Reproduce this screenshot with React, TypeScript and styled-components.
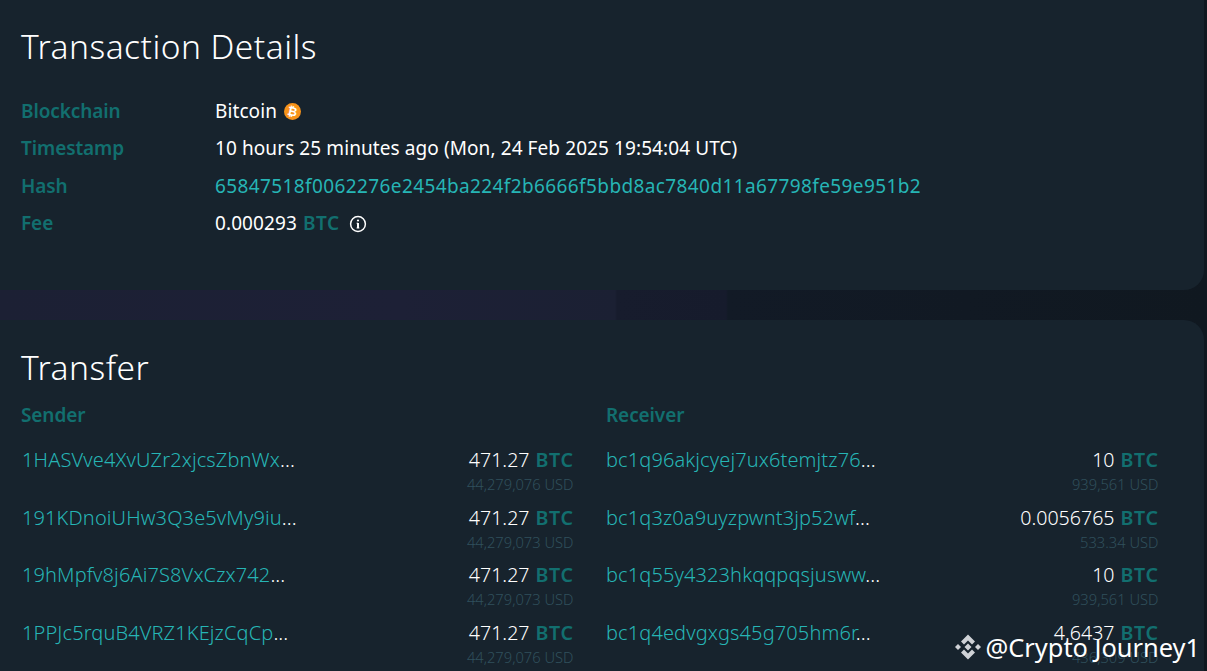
import React from "react";
import styled, { createGlobalStyle } from "styled-components";

const Global = createGlobalStyle`
  html, body { margin: 0; padding: 0; height: 671px; overflow: hidden; background: #101820; }
  #root { height: 671px; }
  * { box-sizing: border-box; }
`;

const Page = styled.div`
  position: relative;
  height: 671px;
  overflow: hidden;
  display: flex;
  flex-direction: column;
  gap: 30px;
  padding-right: 3px;
  font-family: "Noto Sans", "Open Sans", sans-serif;
  background: linear-gradient(90deg, #1c2034 0, #1d2036 400px, #1b2033 615px, #171c2d 617px, #161b2c 726px, #121a26 728px, #101820 1207px);
`;

const Panel = styled.section<{ $height: number; $pad: number }>`
  height: ${(p) => p.$height}px;
  flex: none;
  background: #17232d;
  border-radius: 0 20px 20px 0;
  padding: ${(p) => p.$pad}px 0 0 21px;
`;

const FirstPanel = styled(Panel)`
  border-radius: 0 0 20px 0;
`;

const Title = styled.h2`
  margin: 0;
  font-size: 33.5px;
  line-height: 40px;
  font-weight: 300;
  color: #ffffff;
  letter-spacing: 0.48px;
`;

const InfoGrid = styled.dl`
  margin: 26.5px 0 0;
  display: grid;
  grid-template-columns: 194px 1fr;
  grid-auto-rows: 37.5px;
  font-size: 19px;
`;

const Term = styled.dt`
  color: #126f6f;
  font-weight: 600;
  line-height: 37.5px;
  letter-spacing: -0.1px;
`;

const Value = styled.dd`
  margin: 0;
  color: #ffffff;
  line-height: 37.5px;
  display: flex;
  align-items: center;
  white-space: nowrap;
  letter-spacing: 0.09px;
`;

const HashLink = styled.span`
  color: #26b5b5;
  letter-spacing: 0.39px;
`;

const Unit = styled.span`
  color: #126f6f;
  font-weight: 600;
  margin-left: 6px;
  letter-spacing: 0.6px;
`;

const IconSlot = styled.span<{ $gap: number }>`
  display: inline-flex;
  margin-left: ${(p) => p.$gap}px;
`;

const Columns = styled.div`
  margin-top: 16px;
  display: grid;
  grid-template-columns: 552.5px 552.5px;
  column-gap: 32.5px;
`;

const ColumnHead = styled.div`
  color: #126f6f;
  font-size: 19px;
  font-weight: 600;
  line-height: 24px;
  margin-bottom: 19px;
  letter-spacing: -0.1px;
`;

const Row = styled.div`
  height: 57.5px;
  display: flex;
  justify-content: space-between;
  font-size: 19.6px;
`;

const Address = styled.div<{ $inset: number }>`
  color: #ffffff;
  font-size: 20px;
  line-height: 24px;
  font-weight: 300;
  padding: 2px 0 0 ${(p) => p.$inset}px;
  white-space: nowrap;
  letter-spacing: 0.12px;
`;

const AddressText = styled.span`
  color: #26b5b5;
`;

const Amounts = styled.div`
  display: flex;
  flex-direction: column;
  align-items: flex-end;
  padding-top: 2px;
`;

const Amount = styled.div`
  color: #ffffff;
  line-height: 24px;
  font-weight: 300;
`;

const Usd = styled.div`
  color: #30505c;
  font-size: 14.7px;
  line-height: 24px;
  font-weight: 300;
`;

const Watermark = styled.div`
  position: absolute;
  right: 7px;
  top: 632px;
  display: flex;
  align-items: center;
  gap: 4px;
  color: #ffffff;
  font-size: 25.4px;
  line-height: 30px;
`;

const BitcoinIcon = () => (
  <svg width="17" height="17" viewBox="0 0 17 17">
    <circle cx="8.5" cy="8.5" r="8.5" fill="#f7931a" />
    <text x="8.5" y="12.6" textAnchor="middle" fontSize="12" fontWeight="700" fill="#fff" fontFamily="'Liberation Sans', sans-serif" transform="rotate(12 8.5 8.5)">₿</text>
  </svg>
);

const InfoIcon = () => (
  <svg width="18" height="18" viewBox="0 0 18 18" fill="none" stroke="#fff">
    <circle cx="9" cy="9" r="7.4" strokeWidth="1.5" />
    <path d="M9 8v5" strokeWidth="2" />
    <path d="M7.6 8.2H9M7.6 13h2.8" strokeWidth="1" />
    <circle cx="9" cy="5.5" r="1.1" fill="#fff" stroke="none" />
  </svg>
);

const BinanceIcon = () => (
  <svg width="28" height="28" viewBox="0 0 28 28" fill="#cfd2d6">
    <path d="M14 1.5l7 7-3 3-4-4-4 4-3-3z" />
    <path d="M14 26.5l-7-7 3-3 4 4 4-4 3 3z" />
    <path d="M1 14l3-3 3 3-3 3z" />
    <path d="M21 14l3-3 3 3-3 3z" />
    <path d="M14 10.5l3.5 3.5-3.5 3.5-3.5-3.5z" />
  </svg>
);

type Transfer = { address: string; amount: string; usd: string };

const senders: Transfer[] = [
  { address: "1HASVve4XvUZr2xjcsZbnWx", amount: "471.27", usd: "44,279,076 USD" },
  { address: "191KDnoiUHw3Q3e5vMy9iu", amount: "471.27", usd: "44,279,073 USD" },
  { address: "19hMpfv8j6Ai7S8VxCzx742", amount: "471.27", usd: "44,279,073 USD" },
  { address: "1PPJc5rquB4VRZ1KEjzCqCp", amount: "471.27", usd: "44,279,076 USD" },
];

const receivers: Transfer[] = [
  { address: "bc1q96akjcyej7ux6temjtz76", amount: "10", usd: "939,561 USD" },
  { address: "bc1q3z0a9uyzpwnt3jp52wf", amount: "0.0056765", usd: "533.34 USD" },
  { address: "bc1q55y4323hkqqpqsjusww", amount: "10", usd: "939,561 USD" },
  { address: "bc1q4edvgxgs45g705hm6r", amount: "4.6437", usd: "436,309 USD" },
];

const TransferColumn = ({ title, rows, inset }: { title: string; rows: Transfer[]; inset: number }) => (
  <div>
    <ColumnHead>{title}</ColumnHead>
    {rows.map((r) => (
      <Row key={r.address}>
        <Address $inset={inset}>
          <AddressText>{r.address}</AddressText>...
        </Address>
        <Amounts>
          <Amount>
            {r.amount}
            <Unit>BTC</Unit>
          </Amount>
          <Usd>{r.usd}</Usd>
        </Amounts>
      </Row>
    ))}
  </div>
);

export default function App() {
  return (
    <Page>
      <Global />
      <FirstPanel $height={290} $pad={26}>
        <Title>Transaction Details</Title>
        <InfoGrid>
          <Term>Blockchain</Term>
          <Value>
            Bitcoin
            <IconSlot $gap={7}>
              <BitcoinIcon />
            </IconSlot>
          </Value>
          <Term>Timestamp</Term>
          <Value>10 hours 25 minutes ago (Mon, 24 Feb 2025 19:54:04 UTC)</Value>
          <Term>Hash</Term>
          <Value>
            <HashLink>65847518f0062276e2454ba224f2b6666f5bbd8ac7840d11a67798fe59e951b2</HashLink>
          </Value>
          <Term>Fee</Term>
          <Value>
            0.000293
            <Unit>BTC</Unit>
            <IconSlot $gap={9}>
              <InfoIcon />
            </IconSlot>
          </Value>
        </InfoGrid>
      </FirstPanel>
      <Panel $height={400} $pad={27}>
        <Title>Transfer</Title>
        <Columns>
          <TransferColumn title="Sender" rows={senders} inset={1} />
          <TransferColumn title="Receiver" rows={receivers} inset={0} />
        </Columns>
      </Panel>
      <Watermark>
        <BinanceIcon />
        @Crypto Journey1
      </Watermark>
    </Page>
  );
}
